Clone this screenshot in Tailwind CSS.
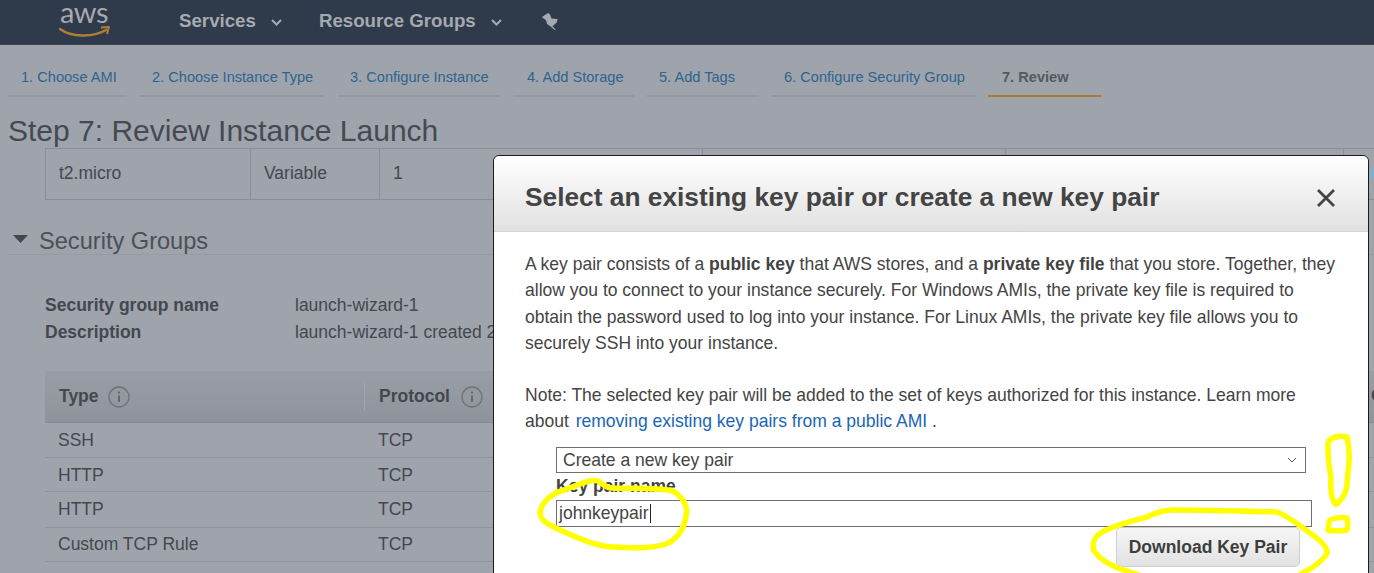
<!DOCTYPE html>
<html lang="en">
<head>
<meta charset="utf-8" />
<script src="https://cdn.jsdelivr.net/npm/@tailwindcss/browser@4"></script>
<title>Step 7: Review Instance Launch</title>
</head>
<body class="bg-[#9fa3ab] font-['Liberation_Sans',Arial,sans-serif] text-[#43484f]">
<div class="relative h-[573px] w-[1374px] overflow-hidden">

  <!-- Top nav -->
  <header class="flex h-[45px] items-center bg-[#2f3b4b] pb-[2px] text-[18.7px] font-bold text-[#a5a9b0] border-b border-[#394453]">
    <div class="relative ml-[60px] h-[43px] w-[51px]">
      <span class="absolute left-0 top-0 font-['Lato',sans-serif] text-[29px] font-normal leading-[24px] tracking-[-0.5px] text-[#a5a9b0]">aws</span>
      <svg class="absolute left-[-1px] top-[24px]" width="52" height="18" viewBox="0 0 52 18" fill="none">
        <path d="M1 5 C12 13 33 14 47 6" stroke="#b07f36" stroke-width="2.4" stroke-linecap="round"/>
        <path d="M42 3.5 L50 3 L48 10" stroke="#b07f36" stroke-width="2" stroke-linejoin="round"/>
      </svg>
    </div>
    <span class="ml-[68px]">Services</span>
    <svg class="ml-[15px] mt-[2px]" width="11" height="7" viewBox="0 0 11 7" fill="none"><path d="M1 1 L5.5 5.5 L10 1" stroke="#a5a9b0" stroke-width="2"/></svg>
    <span class="ml-[37px]">Resource Groups</span>
    <svg class="ml-[15px] mt-[2px]" width="11" height="7" viewBox="0 0 11 7" fill="none"><path d="M1 1 L5.5 5.5 L10 1" stroke="#a5a9b0" stroke-width="2"/></svg>
    <svg class="ml-[39px] mb-[1px]" width="18" height="20" viewBox="0 0 18 20" fill="#a5a9b0"><path d="M1 6 L7 2 L9 3.5 L10.5 7.5 L16.5 8 L16 11 L12 15 L10.8 14.6 L14.6 18.6 L14 19.2 L9.6 15.4 L6 13 L5 9 L2.5 7.5 Z"/></svg>
  </header>

  <!-- Wizard tabs -->
  <nav class="ml-[8px] mt-[16px] flex text-[14.6px] leading-[32px] text-[#2d6590]">
    <a class="block h-[36px] w-[119px] border-b-2 border-[#94989f] pl-[13px]">1. Choose AMI</a>
    <a class="ml-[12px] block h-[36px] w-[185px] border-b-2 border-[#94989f] pl-[13px]">2. Choose Instance Type</a>
    <a class="ml-[14px] block h-[36px] w-[162px] border-b-2 border-[#94989f] pl-[12px]">3. Configure Instance</a>
    <a class="ml-[13px] block h-[36px] w-[121px] border-b-2 border-[#94989f] pl-[14px]">4. Add Storage</a>
    <a class="ml-[13px] block h-[36px] w-[112px] border-b-2 border-[#94989f] pl-[12px]">5. Add Tags</a>
    <a class="ml-[12px] block h-[36px] w-[205px] border-b-2 border-[#94989f] pl-[13px]">6. Configure Security Group</a>
    <a class="ml-[12px] block h-[36px] w-[113px] border-b-2 border-[#ab7836] pl-[14px] font-bold text-[#55595f]">7. Review</a>
  </nav>

  <h1 class="ml-[8px] mt-[16px] h-[35px] text-[30px] leading-[36px] text-[#444a52]">Step 7: Review Instance Launch</h1>

  <!-- Instance table behind the modal -->
  <div class="ml-[45px] flex h-[52px] w-[1400px] border border-[#8a8f97] text-[17.5px] leading-[48px]">
    <div class="w-[205px] border-r border-[#8a8f97] pl-[13px]">t2.micro</div>
    <div class="w-[129px] border-r border-[#8a8f97] pl-[13px]">Variable</div>
    <div class="w-[323px] border-r border-[#8a8f97] pl-[13px]">1</div>
    <div class="w-[303px] border-r border-[#8a8f97]"></div>
    <div class="w-[338px] border-r border-[#8a8f97]"></div>
  </div>

  <!-- Security groups -->
  <div class="ml-[8px] mt-[25px] flex h-[30px] w-[1366px] items-center border-b border-[#969aa2] text-[23.6px]">
    <svg class="mb-[1px] ml-[5px]" width="15" height="8" viewBox="0 0 15 8" fill="#43484f"><path d="M0 0 H15 L7.5 8 Z"/></svg>
    <span class="ml-[11px] mt-[4px] text-[#4b5058]">Security Groups</span>
  </div>

  <dl class="ml-[45px] mt-[37px] grid grid-cols-[250px_1fr] text-[17.5px] leading-[27px]">
    <dt class="font-bold">Security group name</dt><dd>launch-wizard-1</dd>
    <dt class="font-bold">Description</dt><dd>launch-wizard-1 created 2019-01-01</dd>
  </dl>

  <div class="ml-[45px] mt-[25px] w-[1400px] text-[17.5px]">
    <div class="flex h-[52px] items-center border-b border-[#858a92] bg-gradient-to-b from-[#999da5] to-[#8f939b] font-bold">
      <div class="flex h-[29px] w-[320px] items-center border-r border-[#a1a5ac] pl-[14px]">
        <span>Type</span>
        <svg class="ml-[9px]" width="22" height="22" viewBox="0 0 22 22" fill="none"><circle cx="11" cy="11" r="10" stroke="#6e7279" stroke-width="1.3"/><path d="M11 9.5 V16 M11 5.5 V7.5" stroke="#5f636a" stroke-width="1.8"/></svg>
      </div>
      <div class="flex items-center pl-[14px]">
        <span>Protocol</span>
        <svg class="ml-[11px]" width="22" height="22" viewBox="0 0 22 22" fill="none"><circle cx="11" cy="11" r="10" stroke="#6e7279" stroke-width="1.3"/><path d="M11 9.5 V16 M11 5.5 V7.5" stroke="#5f636a" stroke-width="1.8"/></svg>
      </div>
    </div>
    <div class="flex h-[35px] items-center border-b border-[#8f939b]"><div class="w-[320px] pl-[13px]">SSH</div><div class="pl-[13px]">TCP</div></div>
    <div class="flex h-[34px] items-center border-b border-[#8f939b] pt-[1px]"><div class="w-[320px] pl-[13px]">HTTP</div><div class="pl-[13px]">TCP</div></div>
    <div class="flex h-[36px] items-center border-b border-[#8f939b]"><div class="w-[320px] pl-[13px]">HTTP</div><div class="pl-[13px]">TCP</div></div>
    <div class="flex h-[34px] items-center border-b border-[#8f939b]"><div class="w-[320px] pl-[13px]">Custom TCP Rule</div><div class="pl-[13px]">TCP</div></div>
  </div>

  <!-- Bits of the page showing right of the modal -->
  <div class="absolute left-[1370px] top-[169px] h-[10px] w-[4px] bg-[#7fb0cf]"></div>
  <span class="absolute left-[1371px] top-[386px] text-[17px] font-bold leading-[20px]">C</span>

  <!-- Modal -->
  <div class="absolute left-[493px] top-[155px] h-[440px] w-[876px] rounded-[6px] border border-[#1b1b1b] bg-white">
    <div class="flex h-[76px] items-center justify-between rounded-t-[6px] border-b border-[#d5d5d5] bg-gradient-to-b from-white to-[#e1e1e1] pl-[31px] pr-[32px] pt-[8px]">
      <h2 class="text-[26.3px] font-bold text-[#444]">Select an existing key pair or create a new key pair</h2>
      <svg width="20" height="20" viewBox="0 0 20 20" fill="none"><path d="M2 2 L18 18 M18 2 L2 18" stroke="#444" stroke-width="2.8"/></svg>
    </div>
    <div class="pl-[31px] pr-[30px] pt-[18.7px] text-[17.52px] leading-[26.4px] text-[#444]">
      <p>A key pair consists of a <b>public key</b> that AWS stores, and a <b>private key file</b> that you store. Together, they allow you to connect to your instance securely. For Windows AMIs, the private key file is required to obtain the password used to log into your instance. For Linux AMIs, the private key file allows you to securely SSH into your instance.</p>
      <p class="mt-[25.3px]">Note: The selected key pair will be added to the set of keys authorized for this instance. Learn more about <a class="ml-[2px] text-[#1a66b5]">removing existing key pairs from a public AMI</a> .</p>
      <div class="ml-[31px] mt-[13px]">
        <div class="flex h-[26px] w-[750px] items-center justify-between border border-[#707070] pl-[6px] pr-[8px] leading-[24px]">
          <span>Create a new key pair</span>
          <svg width="10" height="6" viewBox="0 0 10 6" fill="none"><path d="M1 1 L5 5 L9 1" stroke="#555" stroke-width="1"/></svg>
        </div>
        <div class="mt-[1px] h-[26px] font-bold leading-[24px]">Key pair name</div>
        <div class="flex h-[27px] w-[756px] items-center border border-[#707070] pl-[2px] leading-[25px]">
          <span>johnkeypair</span><span class="ml-[1px] h-[19px] w-px bg-[#222]"></span>
        </div>
        <div class="flex w-[744px] justify-end">
          <button class="h-[40px] w-[184px] rounded-[5px] border border-[#cfcfcf] bg-gradient-to-b from-[#f6f6f6] to-[#e2e2e2] text-[17.5px] font-bold text-[#3d3d3d]">Download Key Pair</button>
        </div>
      </div>
    </div>
  </div>

  <!-- Yellow marker scribbles drawn on the screenshot -->
  <svg class="absolute left-0 top-0" width="1374" height="573" viewBox="0 0 1374 573" fill="none" stroke="#ffff00" stroke-width="5.5" stroke-linecap="round" stroke-linejoin="round">
    <path d="M558 492 C575 487 590 478 598 481 C604 485 606 488 612 488 C630 489 655 487 673 491 C684 498 688 507 686 516 C684 530 676 540 666 544 C650 549 630 548 612 547 C598 546 582 540 567 533 C553 527 541 522 540 514 C540 505 548 497 558 492"/>
    <path d="M1142 576 C1134 573 1126 571 1118 568 C1108 564 1099 558 1094 551 C1091 542 1096 535 1104 531 C1118 524 1135 520 1147 517 C1155 513 1162 510 1172 510 C1200 510 1240 511 1277 512 C1290 517 1300 526 1310 533 C1320 540 1328 547 1327 553 C1324 560 1316 565 1310 569 C1306 571 1302 573 1298 576"/>
    <path d="M1328 443 C1330 437 1340 435 1347 437 C1349 446 1350 460 1348 472 C1347 485 1347 492 1342 498 C1339 502 1337 505 1335 504 C1331 498 1330 490 1331 478 C1330 470 1328 462 1328 450 Z"/>
    <path d="M1329 522 C1330 518 1340 517 1347 518 C1348 523 1348 527 1347 530 C1340 531 1332 531 1328 530 Z"/>
  </svg>
</div>
</body>
</html>
